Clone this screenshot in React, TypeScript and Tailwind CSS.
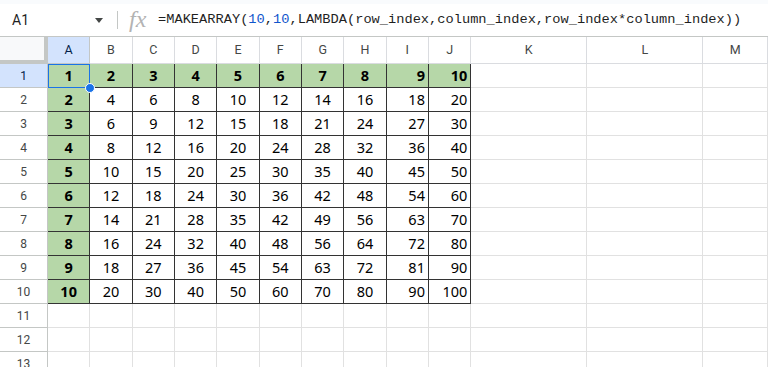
import React from 'react';

const COLS = ['A', 'B', 'C', 'D', 'E', 'F', 'G', 'H', 'I', 'J', 'K', 'L', 'M'];
const ROW_COUNT = 13;

function FormulaBar() {
  return (
    <div className="h-[33px] flex items-center border-b border-[#c4c7c5] bg-white">
      <div className="w-[95px] pl-[12px] text-[14px] text-[#1f1f1f] font-['Roboto',sans-serif]">A1</div>
      {/* dropdown caret */}
      <svg width="8" height="5" viewBox="0 0 8 5" className="mt-[1px]">
        <path d="M0 0 L8 0 L4 5 Z" fill="#444746" />
      </svg>
      <div className="ml-[14px] w-px h-[18px] bg-[#c4c7c5]" />
      <span className="ml-[11px] w-[29px] italic text-[24px] leading-none text-[#b3b3b3] font-['Liberation_Serif',serif] -mt-[3px]">
        fx
      </span>
      <div className="text-[13.7px] text-[#1f1f1f] whitespace-nowrap font-['Liberation_Mono',monospace]">
        =MAKEARRAY(<span className="text-[#1155cc]">10</span>,<span className="text-[#1155cc]">10</span>
        ,LAMBDA(row_index,column_index,row_index*column_index))
      </div>
    </div>
  );
}

function HeaderRow() {
  return (
    <>
      <div className="bg-[#f8f9fa] border-r-[4px] border-b-[4px] border-[#c4c7c5]" />
      {COLS.map((c, i) => (
        <div
          key={c}
          className={
            'flex items-center justify-center text-[12.5px] border-r border-b font-[\'Roboto\',sans-serif] ' +
            (i === 0
              ? 'bg-[#d3e3fd] text-[#041e49] border-[#c4c7c5]'
              : 'bg-white text-[#444746] border-[#dadce0]')
          }
        >
          {c}
        </div>
      ))}
    </>
  );
}

function Cell({ r, c }: { r: number; c: number }) {
  const inData = r <= 10 && c < 10;
  const green = inData && (r === 1 || c === 0);
  const value = inData ? r * (c + 1) : null;
  const right = c >= 8;

  return (
    <div
      className={
        'relative flex items-center text-[14.5px] text-black font-[\'Liberation_Sans\',Arial,sans-serif] border-r border-b ' +
        (inData ? 'border-[#333] ' : 'border-[#e1e1e1] ') +
        (green ? 'bg-[#b6d7a8] font-bold ' : 'bg-white ') +
        (right ? 'justify-end pr-[3px]' : 'justify-center')
      }
    >
      {value}
      {r === 1 && c === 0 && (
        <>
          <div className="absolute left-0 top-0 right-[-2px] bottom-[-2px] border-t border-l border-r-2 border-b-2 border-[#1a73e8] pointer-events-none" />
          <div className="absolute right-[-6px] bottom-[-6px] w-[10px] h-[10px] rounded-full bg-[#1a73e8] border border-white z-10" />
        </>
      )}
    </div>
  );
}

export default function App() {
  const rows = Array.from({ length: ROW_COUNT }, (_, i) => i + 1);

  return (
    <div className="w-[768px] h-[367px] overflow-hidden bg-white">
      <div className="h-[4px] bg-[#f9fbfd]" />
      <FormulaBar />
      <div className="grid grid-cols-[48px_repeat(10,42.33px)_116px_116px_1fr] grid-rows-[27px_repeat(13,24px)]">
        <HeaderRow />
        {rows.map((r) => (
          <React.Fragment key={r}>
            <div
              className={
                'flex items-center justify-center text-[12px] border-r border-b border-[#c4c7c5] font-[\'Roboto\',sans-serif] ' +
                (r === 1 ? 'bg-[#d3e3fd] text-[#041e49]' : 'bg-white text-[#444746]')
              }
            >
              {r}
            </div>
            {COLS.map((_, c) => (
              <Cell key={c} r={r} c={c} />
            ))}
          </React.Fragment>
        ))}
      </div>
    </div>
  );
}
